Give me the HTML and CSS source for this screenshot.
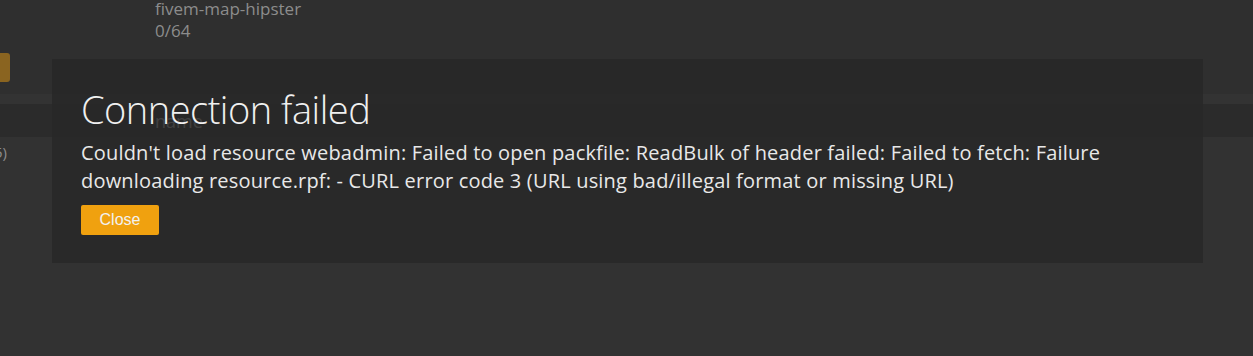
FILE: index.html
```html
<!DOCTYPE html>
<html lang="en">
<head>
<meta charset="utf-8">
<title>Connection failed</title>
<link rel="stylesheet" href="styles.css">
</head>
<body>
<div class="page">
  <div class="top">
    <div class="left-edge"><div class="edge-button"></div></div>
    <div class="resource">
      <div class="res-name">fivem-map-hipster</div>
      <div class="res-count">0/64</div>
    </div>
  </div>
  <div class="strip"></div>
  <div class="table-head"><span class="col-name">name</span></div>
  <div class="table-row"><span class="row-cut">5)</span></div>
</div>

<div class="modal">
  <h1 class="modal-title">Connection failed</h1>
  <p class="modal-text">Couldn't load resource webadmin: Failed to open packfile: ReadBulk of header failed: Failed to fetch: Failure downloading resource.rpf: - CURL error code 3 (URL using bad/illegal format or missing URL)</p>
  <button class="modal-close">Close</button>
</div>
</body>
</html>
```

FILE: styles.css
```css
html, body {
  margin: 0;
  padding: 0;
  height: 100%;
}
body {
  background: #323232;
  font-family: "Open Sans", "Noto Sans", sans-serif;
  overflow: hidden;
  position: relative;
}
.page {
  display: flex;
  flex-direction: column;
}
.top {
  display: flex;
  height: 94px;
  background: #2f2f2f;
}
.left-edge {
  width: 10px;
  padding-top: 53px;
}
.edge-button {
  width: 10px;
  height: 29px;
  background: #8a6420;
  border-radius: 0 3px 3px 0;
}
.resource {
  padding-left: 145px;
  margin-top: -2px;
  color: #8c8c8c;
  font-size: 17px;
  line-height: 22px;
}
.strip {
  height: 10px;
  background: #333333;
}
.table-head {
  height: 33px;
  background: #2b2b2b;
  display: flex;
  align-items: center;
  padding-left: 155px;
}
.col-name {
  color: #dcdcdc;
  font-size: 18px;
}
.table-row {
  height: 40px;
  padding-top: 4px;
  box-sizing: border-box;
}
.row-cut {
  display: inline-block;
  margin-left: -6px;
  color: #8c8c8c;
  font-size: 15px;
}
.modal {
  position: absolute;
  left: 52px;
  top: 59px;
  width: 1151px;
  height: 204px;
  box-sizing: border-box;
  padding: 24px 29px 0 29px;
  background: rgba(40, 40, 40, 0.86);
  color: #ececec;
}
.modal-title {
  margin: 0;
  font-size: 38px;
  font-weight: 300;
  letter-spacing: -0.5px;
  line-height: 52px;
  color: #f0f0f0;
}
.modal-text {
  margin: 4px 0 10px 0;
  font-size: 20px;
  line-height: 28px;
  letter-spacing: 0.18px;
  color: #e8e8e8;
}
.modal-close {
  display: block;
  width: 78px;
  height: 30px;
  padding: 0;
  border: none;
  border-radius: 2px;
  background: #f0a10f;
  color: #f2f2f2;
  font-family: "Liberation Sans", Arial, sans-serif;
  font-size: 16px;
}
```
